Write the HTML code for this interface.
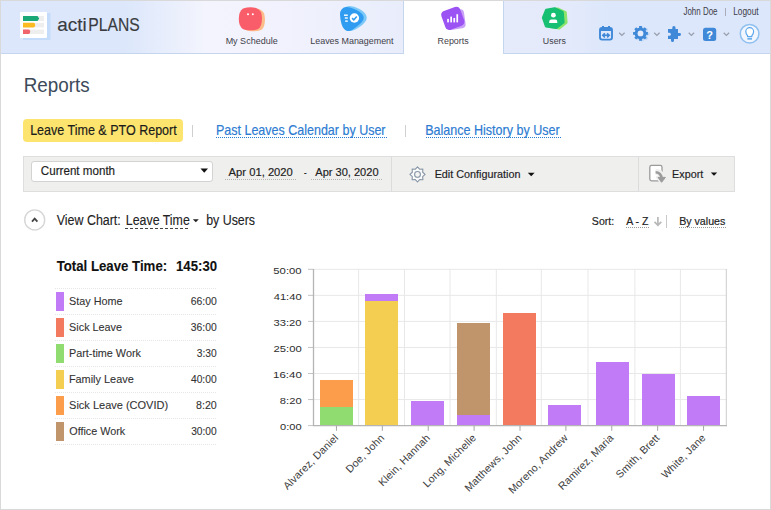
<!DOCTYPE html>
<html><head><meta charset="utf-8"><style>
html,body{margin:0;padding:0}
body{width:771px;height:510px;position:relative;overflow:hidden;background:#fff;font-family:"Liberation Sans",sans-serif}
#frame{position:absolute;left:0;top:0;width:769px;height:508px;border:1px solid #d9d9d9;pointer-events:none}
#hdr{position:absolute;left:0;top:0;width:771px;height:53px;background:#dce7fb;border-bottom:1px solid #c3d6ee}
#tabsbg{position:absolute;left:125px;top:0;width:379px;height:53px;background:linear-gradient(90deg,rgba(243,244,253,0) 0px,#f3f4fd 80px,#f1f2fd 155px,#e9edfb 278px)}
#usrbg{position:absolute;left:503px;top:0;width:110px;height:53px;background:linear-gradient(90deg,#e6ebfb 0px,#e4eafb 60px,rgba(228,234,251,0) 110px)}
#reptab{position:absolute;left:403px;top:0;width:99px;height:54px;background:#fff;border-left:1px solid #c3d6ee;border-right:1px solid #c3d6ee}
</style></head><body>
<div id="hdr"></div>
<div id="tabsbg"></div>
<div id="usrbg"></div>
<div id="reptab"></div><svg style="position:absolute;left:18px;top:10px" width="36" height="32" viewBox="0 0 36 32">
<rect x="5" y="3" width="27.5" height="27" fill="#c4dbf9"/>
<rect x="2" y="2" width="27" height="26" rx="1" fill="#ffffff"/>
<rect x="5" y="6" width="21" height="5" fill="#eeeeee"/>
<rect x="5" y="12.8" width="21" height="4.6" fill="#eeeeee"/>
<rect x="5" y="19.6" width="21" height="4.4" fill="#eeeeee"/>
<path d="M5 6 H19.5 L21.2 8.5 L19.5 11 H5 Z" fill="#1aa876"/>
<path d="M5 12.8 H15.5 Q17.2 12.8 17.2 15.1 Q17.2 17.4 15.5 17.4 H5 Z" fill="#fcbb22"/>
<path d="M5 19.6 H10.5 Q12.2 19.6 12.2 21.8 Q12.2 24 10.5 24 H5 Z" fill="#f0646c"/>
</svg><svg style="position:absolute;left:234px;top:4px" width="36" height="30" viewBox="0 0 36 30">
<path d="M11 6 Q18 3 25 5 Q31 7 31 15 Q31 24 27 26 Q22 28 15 27 Q9 26 7 20 Q6 9 11 6Z" fill="#fdbd8a"/>
<path d="M9 4.5 Q16 2.5 22 4 Q28 6 28 14 Q28 23 24 25 Q19 27 12 26 Q6 25 5 18 Q4 8 9 4.5Z" fill="#f95d6a"/>
<circle cx="14" cy="10.2" r="1" fill="#fff"/><circle cx="18.8" cy="10.2" r="1" fill="#fff"/>
</svg><svg style="position:absolute;left:336px;top:3px" width="36" height="32" viewBox="0 0 36 32">
<path d="M6 10 Q6.5 4 12 3.2 Q17 2.6 23.5 6 Q30.8 10 30.8 14.7 Q30.8 18.8 23.5 24 Q17 28.5 13 28 Q8 27.5 6.5 21 Z" fill="#7cc9f8"/>
<path d="M4 11.5 Q4 5 10 4 Q14 3.6 20 6.8 Q27.8 10.8 27.8 14.9 Q27.8 18.4 20.5 23.8 Q15 28.5 12 28 Q7.5 27.5 5.5 21 Q4 16 4 11.5 Z" fill="#2f9cf1"/>
<circle cx="18.4" cy="15" r="4.7" fill="#fff"/>
<path d="M16.1 15.1 L17.8 16.8 L20.8 13.6" stroke="#2f9cf1" stroke-width="1.5" fill="none"/>
<rect x="8" y="11.5" width="3.8" height="1.4" fill="#fff"/><rect x="8.8" y="14.3" width="3" height="1.4" fill="#fff"/><rect x="9.2" y="17.4" width="2.6" height="1.4" fill="#fff"/>
</svg><svg style="position:absolute;left:438px;top:4px" width="32" height="30" viewBox="0 0 32 30">
<g transform="rotate(-8 17.3 15.6)"><rect x="7.7" y="6" width="19.2" height="19.2" rx="4" fill="#c9a2f8"/></g>
<g transform="rotate(-20 14.8 14.3)"><rect x="4.8" y="4.3" width="20" height="20" rx="4.2" fill="#9b53f3"/></g>
<rect x="9.2" y="14.9" width="1.7" height="3.5" fill="#fff"/>
<rect x="12.3" y="12.6" width="1.7" height="5.8" fill="#fff"/>
<rect x="15.4" y="14" width="1.7" height="4.4" fill="#fff"/>
<rect x="18.4" y="10.2" width="1.7" height="8.2" fill="#fff"/>
</svg><svg style="position:absolute;left:538px;top:4px" width="34" height="30" viewBox="0 0 34 30">
<polygon points="19.6,4.6 27.6,8.3 28.4,18.6 21.3,24.2 11,22.5 8.1,14.1 11.2,6.2" fill="#8de36b" stroke="#8de36b" stroke-width="2.4" stroke-linejoin="round"/>
<polygon points="16.6,4.4 24.6,8.0 25.4,18.3 18.3,23.9 8.0,22.2 5.1,13.8 8.2,6.0" fill="#17bf72" stroke="#17bf72" stroke-width="2.4" stroke-linejoin="round"/>
<circle cx="15.4" cy="11.2" r="2.4" fill="#fff"/>
<path d="M11.2 19 V17.8 Q11.2 15.6 13.4 15.6 H17.3 Q19.3 15.6 19.3 17.8 V19 Z" fill="#fff"/>
</svg><div style="position:absolute;left:725px;top:8px;width:1px;height:8px;background:#a9acb8"></div><svg style="position:absolute;left:597px;top:24px" width="140" height="22" viewBox="0 0 140 22">
<rect x="3" y="4" width="12" height="11.6" rx="2" fill="none" stroke="#3f89d8" stroke-width="1.9"/>
<rect x="3" y="4" width="12" height="3" fill="#3f89d8"/>
<rect x="5" y="2" width="2" height="3" fill="#3f89d8"/><rect x="11" y="2" width="2" height="3" fill="#3f89d8"/>
<path d="M5.8 11.3 H12.2 M7.9 9.3 L5.8 11.3 L7.9 13.3 M10.1 9.3 L12.2 11.3 L10.1 13.3" stroke="#3f89d8" stroke-width="1.6" fill="none"/>
<path d="M22.2 8.8 L24.9 11.4 L27.6 8.8" stroke="#98a0ad" stroke-width="1.3" fill="none"/>
<g transform="translate(45.2 10)" fill="#bcd6f6">
<circle r="5.8"/>
<rect x="-1.4" y="-7.3" width="2.8" height="14.6"/>
<rect x="-1.4" y="-7.3" width="2.8" height="14.6" transform="rotate(45)"/>
<rect x="-1.4" y="-7.3" width="2.8" height="14.6" transform="rotate(90)"/>
<rect x="-1.4" y="-7.3" width="2.8" height="14.6" transform="rotate(135)"/>
</g>
<g transform="translate(43.5 9.4)" fill="#3f89d8">
<circle r="5.9"/>
<rect x="-1.4" y="-7.4" width="2.8" height="14.8"/>
<rect x="-1.4" y="-7.4" width="2.8" height="14.8" transform="rotate(45)"/>
<rect x="-1.4" y="-7.4" width="2.8" height="14.8" transform="rotate(90)"/>
<rect x="-1.4" y="-7.4" width="2.8" height="14.8" transform="rotate(135)"/>
<circle r="2.9" fill="#e4ecfc"/>
</g>
<path d="M57.2 8.8 L59.9 11.4 L62.6 8.8" stroke="#98a0ad" stroke-width="1.3" fill="none"/>
<path d="M71 5 H75.3 V3.6 A1.6 1.6 0 0 1 78.5 3.6 V5 H81 V9.1 H82.6 A1.4 1.4 0 0 1 82.6 11.9 H81 V15 H77 V16.6 A1.5 1.5 0 0 1 74 16.6 V15 H71 V11.7 H72.4 A1.5 1.5 0 0 0 72.4 8.7 H71 Z" fill="#3f89d8"/>
<path d="M91.7 8.8 L94.4 11.4 L97.1 8.8" stroke="#98a0ad" stroke-width="1.3" fill="none"/>
<rect x="106" y="3.8" width="13.2" height="13.2" rx="2.5" fill="#3f89d8"/>
<text x="112.6" y="14.6" font-family="Liberation Sans" font-weight="bold" font-size="11" fill="#fff" text-anchor="middle">?</text>
<path d="M126.7 8.8 L129.4 11.4 L132.1 8.8" stroke="#98a0ad" stroke-width="1.3" fill="none"/>
</svg><svg style="position:absolute;left:738px;top:22px" width="24" height="24" viewBox="0 0 24 24">
<circle cx="11.6" cy="11.7" r="9.3" fill="#f1f6fe" stroke="#8fc0ef" stroke-width="1.5"/>
<path d="M9.6 13.7 Q7.8 12 7.8 9.6 A3.9 3.9 0 0 1 15.6 9.6 Q15.6 12 13.8 13.7 V14.6 H9.6 Z" fill="#fff" stroke="#5ba6ec" stroke-width="1.2" stroke-linejoin="round"/>
<rect x="9.4" y="16.1" width="4.6" height="1.5" fill="#5ba6ec"/>
</svg><div style="position:absolute;left:23px;top:119px;width:160px;height:23px;background:#fde46e;border-radius:4px"></div><div style="position:absolute;left:192px;top:125px;width:1px;height:12px;background:#cfcfcf"></div><div style="position:absolute;left:405px;top:125px;width:1px;height:12px;background:#cfcfcf"></div><div style="position:absolute;left:23px;top:156px;width:710px;height:34px;background:#efefee;border:1px solid #dedede"></div><div style="position:absolute;left:31px;top:161px;width:180px;height:19px;background:#fff;border:1px solid #d3d3d3;border-radius:3px"></div><svg style="position:absolute;left:200px;top:168px" width="9" height="6"><path d="M0.5 0.5 H8 L4.25 4.7Z" fill="#111"/></svg><div style="position:absolute;left:391px;top:157px;width:1px;height:34px;background:#dcdcdc"></div><svg style="position:absolute;left:404px;top:160px" width="28" height="28" viewBox="0 0 28 28">
<polygon points="13.50,6.80 15.64,9.23 18.87,9.03 18.67,12.26 21.10,14.40 18.67,16.54 18.87,19.77 15.64,19.57 13.50,22.00 11.36,19.57 8.13,19.77 8.33,16.54 5.90,14.40 8.33,12.26 8.13,9.03 11.36,9.23" fill="#fafafa" stroke="#8796a6" stroke-width="1.1" stroke-linejoin="round"/>
<circle cx="13.5" cy="14.4" r="2.9" fill="#f4f4f4" stroke="#8796a6" stroke-width="1.1"/>
</svg><svg style="position:absolute;left:527px;top:172px" width="9" height="6"><path d="M0.8 0.8 H7.6 L4.2 4.3Z" fill="#111"/></svg><div style="position:absolute;left:638px;top:157px;width:1px;height:34px;background:#dcdcdc"></div><svg style="position:absolute;left:644px;top:160px" width="28" height="28" viewBox="0 0 28 28">
<rect x="5.8" y="5.4" width="12.2" height="15.4" rx="1.8" fill="#fff" stroke="#9b9b9b" stroke-width="1.3"/>
<path d="M11.5 11.8 Q17 11.8 17.8 17.5" fill="none" stroke="#efefee" stroke-width="6"/>
<path d="M13.2 17.2 L22 17.2 L17.6 22.6 Z" fill="#efefee" stroke="#efefee" stroke-width="3" stroke-linejoin="round"/>
<path d="M11.6 12.2 Q16.6 12.2 17.6 17.8" fill="none" stroke="#9b9b9b" stroke-width="2.6"/>
<path d="M14 17.4 L21.4 17.4 L17.6 22.3 Z" fill="#9b9b9b" stroke="#9b9b9b" stroke-width="1" stroke-linejoin="round"/>
</svg><svg style="position:absolute;left:710px;top:172px" width="9" height="6"><path d="M0.8 0.5 H7.2 L4 3.7Z" fill="#111"/></svg><svg style="position:absolute;left:22px;top:207px" width="26" height="26" viewBox="0 0 26 26">
<circle cx="12.7" cy="12.9" r="10" fill="#fff" stroke="#d6d6d6" stroke-width="1.4"/>
<path d="M10 14.6 L12.7 11.6 L15.4 14.6" fill="none" stroke="#444" stroke-width="1.8"/>
</svg><svg style="position:absolute;left:192px;top:219px" width="8" height="5"><path d="M0.8 0.3 H6.8 L3.8 3.3Z" fill="#222"/></svg><svg style="position:absolute;left:653px;top:216px" width="10" height="11" viewBox="0 0 10 11"><path d="M4.9 1 V9 M1.5 5.8 L4.9 9.2 L8.3 5.8" fill="none" stroke="#b9b9b9" stroke-width="1.7"/></svg><div style="position:absolute;left:666px;top:215px;width:1px;height:13px;background:#c8c8c8"></div><div style="position:absolute;left:56px;top:292px;width:8px;height:19px;background:#c27bf6"></div><div style="position:absolute;left:56px;top:318px;width:8px;height:19px;background:#f47a5f"></div><div style="position:absolute;left:56px;top:344px;width:8px;height:19px;background:#90dc70"></div><div style="position:absolute;left:56px;top:370px;width:8px;height:19px;background:#f3ce50"></div><div style="position:absolute;left:56px;top:396px;width:8px;height:19px;background:#fb9d4b"></div><div style="position:absolute;left:56px;top:422px;width:8px;height:19px;background:#c0956b"></div><svg style="position:absolute;left:0;top:0" width="771" height="510" font-family="Liberation Sans, sans-serif"><line x1="308.0" y1="425.60" x2="313.5" y2="425.60" stroke="#c4c4c4" stroke-width="1"/><line x1="313.5" y1="399.55" x2="726.5" y2="399.55" stroke="#e8e8e8" stroke-width="1"/><line x1="308.0" y1="399.55" x2="313.5" y2="399.55" stroke="#c4c4c4" stroke-width="1"/><line x1="313.5" y1="373.50" x2="726.5" y2="373.50" stroke="#e8e8e8" stroke-width="1"/><line x1="308.0" y1="373.50" x2="313.5" y2="373.50" stroke="#c4c4c4" stroke-width="1"/><line x1="313.5" y1="347.45" x2="726.5" y2="347.45" stroke="#e8e8e8" stroke-width="1"/><line x1="308.0" y1="347.45" x2="313.5" y2="347.45" stroke="#c4c4c4" stroke-width="1"/><line x1="313.5" y1="321.40" x2="726.5" y2="321.40" stroke="#e8e8e8" stroke-width="1"/><line x1="308.0" y1="321.40" x2="313.5" y2="321.40" stroke="#c4c4c4" stroke-width="1"/><line x1="313.5" y1="295.35" x2="726.5" y2="295.35" stroke="#e8e8e8" stroke-width="1"/><line x1="308.0" y1="295.35" x2="313.5" y2="295.35" stroke="#c4c4c4" stroke-width="1"/><line x1="313.5" y1="269.30" x2="726.5" y2="269.30" stroke="#e8e8e8" stroke-width="1"/><line x1="308.0" y1="269.30" x2="313.5" y2="269.30" stroke="#c4c4c4" stroke-width="1"/><line x1="358.60" y1="269" x2="358.60" y2="425.80" stroke="#e8e8e8" stroke-width="1"/><line x1="404.50" y1="269" x2="404.50" y2="425.80" stroke="#e8e8e8" stroke-width="1"/><line x1="450.00" y1="269" x2="450.00" y2="425.80" stroke="#e8e8e8" stroke-width="1"/><line x1="496.30" y1="269" x2="496.30" y2="425.80" stroke="#e8e8e8" stroke-width="1"/><line x1="541.30" y1="269" x2="541.30" y2="425.80" stroke="#e8e8e8" stroke-width="1"/><line x1="588.00" y1="269" x2="588.00" y2="425.80" stroke="#e8e8e8" stroke-width="1"/><line x1="634.90" y1="269" x2="634.90" y2="425.80" stroke="#e8e8e8" stroke-width="1"/><line x1="680.40" y1="269" x2="680.40" y2="425.80" stroke="#e8e8e8" stroke-width="1"/><line x1="726.30" y1="269" x2="726.30" y2="425.80" stroke="#cdcdcd" stroke-width="1"/><rect x="320" y="407" width="33" height="19" fill="#90dc70"/><rect x="320" y="380" width="33" height="27" fill="#fb9d4b"/><rect x="365" y="301" width="33" height="125" fill="#f3ce50"/><rect x="365" y="294" width="33" height="7" fill="#c27bf6"/><rect x="411" y="401" width="33" height="25" fill="#c27bf6"/><rect x="457" y="415" width="33" height="11" fill="#c27bf6"/><rect x="457" y="323" width="33" height="92" fill="#c0956b"/><rect x="503" y="313" width="33" height="113" fill="#f47a5f"/><rect x="548" y="405" width="33" height="21" fill="#c27bf6"/><rect x="596" y="362" width="33" height="64" fill="#c27bf6"/><rect x="642" y="374" width="33" height="52" fill="#c27bf6"/><rect x="687" y="396" width="33" height="30" fill="#c27bf6"/><line x1="313.5" y1="269" x2="313.5" y2="426" stroke="#b4b4b4" stroke-width="1.3"/><line x1="313" y1="425.6" x2="727" y2="425.6" stroke="#b4b4b4" stroke-width="1.3"/><line x1="336.44" y1="425.8" x2="336.44" y2="430.8" stroke="#a6a6a6" stroke-width="1"/><text transform="translate(339.04 438.60) rotate(-45)" text-anchor="end" font-size="10.6" letter-spacing="0.12" fill="#404040">Alvarez, Daniel</text><line x1="382.33" y1="425.8" x2="382.33" y2="430.8" stroke="#a6a6a6" stroke-width="1"/><text transform="translate(384.93 438.60) rotate(-45)" text-anchor="end" font-size="10.6" letter-spacing="0.12" fill="#404040">Doe, John</text><line x1="428.22" y1="425.8" x2="428.22" y2="430.8" stroke="#a6a6a6" stroke-width="1"/><text transform="translate(430.82 438.60) rotate(-45)" text-anchor="end" font-size="10.6" letter-spacing="0.12" fill="#404040">Klein, Hannah</text><line x1="474.11" y1="425.8" x2="474.11" y2="430.8" stroke="#a6a6a6" stroke-width="1"/><text transform="translate(476.71 438.60) rotate(-45)" text-anchor="end" font-size="10.6" letter-spacing="0.12" fill="#404040">Long, Michelle</text><line x1="520.00" y1="425.8" x2="520.00" y2="430.8" stroke="#a6a6a6" stroke-width="1"/><text transform="translate(522.60 438.60) rotate(-45)" text-anchor="end" font-size="10.6" letter-spacing="0.12" fill="#404040">Matthews, John</text><line x1="565.89" y1="425.8" x2="565.89" y2="430.8" stroke="#a6a6a6" stroke-width="1"/><text transform="translate(568.49 438.60) rotate(-45)" text-anchor="end" font-size="10.6" letter-spacing="0.12" fill="#404040">Moreno, Andrew</text><line x1="611.78" y1="425.8" x2="611.78" y2="430.8" stroke="#a6a6a6" stroke-width="1"/><text transform="translate(614.38 438.60) rotate(-45)" text-anchor="end" font-size="10.6" letter-spacing="0.12" fill="#404040">Ramirez, Maria</text><line x1="657.67" y1="425.8" x2="657.67" y2="430.8" stroke="#a6a6a6" stroke-width="1"/><text transform="translate(660.27 438.60) rotate(-45)" text-anchor="end" font-size="10.6" letter-spacing="0.12" fill="#404040">Smith, Brett</text><line x1="703.56" y1="425.8" x2="703.56" y2="430.8" stroke="#a6a6a6" stroke-width="1"/><text transform="translate(706.16 438.60) rotate(-45)" text-anchor="end" font-size="10.6" letter-spacing="0.12" fill="#404040">White, Jane</text></svg>
<svg style="position:absolute;left:0;top:0" width="771" height="510" font-family="Liberation Sans, sans-serif"><text x="57.20" y="31" font-size="18.2" fill="#393b40" stroke="#393b40" stroke-width="0.15" textLength="29.42" lengthAdjust="spacingAndGlyphs">acti</text><text x="88.30" y="31" font-size="18.2" fill="#393b40" stroke="#393b40" stroke-width="0.15" textLength="51.39" lengthAdjust="spacingAndGlyphs">PLANS</text><text x="225.64" y="44" font-size="9.6" fill="#3f3f4a" textLength="52.04" lengthAdjust="spacingAndGlyphs">My Schedule</text><text x="310.26" y="44" font-size="9.6" fill="#3f3f4a" textLength="83.30" lengthAdjust="spacingAndGlyphs">Leaves Management</text><text x="437.55" y="44" font-size="9.6" fill="#3f3f4a" textLength="31.09" lengthAdjust="spacingAndGlyphs">Reports</text><text x="542.85" y="44" font-size="9.6" fill="#3f3f4a" textLength="23.06" lengthAdjust="spacingAndGlyphs">Users</text><text x="683.47" y="15" font-size="10.8" fill="#3c3c46" textLength="34.00" lengthAdjust="spacingAndGlyphs">John Doe</text><text x="733.22" y="15" font-size="10.8" fill="#3c3c46" textLength="25.45" lengthAdjust="spacingAndGlyphs">Logout</text><text x="23.76" y="92" font-size="19.6" fill="#3d4a5a" textLength="65.95" lengthAdjust="spacingAndGlyphs">Reports</text><text x="30.15" y="135" font-size="13.9" fill="#1b1b1b" stroke="#1b1b1b" stroke-width="0.18" textLength="146.59" lengthAdjust="spacingAndGlyphs">Leave Time &amp; PTO Report</text><text x="215.93" y="135" font-size="13.9" fill="#2c7bd2" stroke="#2c7bd2" stroke-width="0.18" textLength="169.62" lengthAdjust="spacingAndGlyphs">Past Leaves Calendar by User</text><line x1="216" y1="137.5" x2="387" y2="137.5" stroke="#2c7bd2" stroke-width="1" stroke-dasharray="1 1"/><text x="425.18" y="135" font-size="13.9" fill="#2c7bd2" stroke="#2c7bd2" stroke-width="0.18" textLength="134.46" lengthAdjust="spacingAndGlyphs">Balance History by User</text><line x1="426" y1="137.5" x2="561" y2="137.5" stroke="#2c7bd2" stroke-width="1" stroke-dasharray="1 1"/><text x="40.85" y="175" font-size="12.2" fill="#1e1e1e" stroke="#1e1e1e" stroke-width="0.18" textLength="74.24" lengthAdjust="spacingAndGlyphs">Current month</text><text x="228.59" y="176" font-size="11.8" fill="#222" stroke="#222" stroke-width="0.18" textLength="64.27" lengthAdjust="spacingAndGlyphs">Apr 01, 2020</text><line x1="225" y1="179.5" x2="296" y2="179.5" stroke="#b4b4b4" stroke-width="1" stroke-dasharray="1 1"/><text x="303.97" y="176" font-size="11.8" fill="#222" stroke="#222" stroke-width="0.18" textLength="2.61" lengthAdjust="spacingAndGlyphs">-</text><text x="315.29" y="176" font-size="11.8" fill="#222" stroke="#222" stroke-width="0.18" textLength="63.25" lengthAdjust="spacingAndGlyphs">Apr 30, 2020</text><line x1="311" y1="179.5" x2="382" y2="179.5" stroke="#b4b4b4" stroke-width="1" stroke-dasharray="1 1"/><text x="434.68" y="178" font-size="11.4" fill="#1e1e1e" stroke="#1e1e1e" stroke-width="0.18" textLength="85.75" lengthAdjust="spacingAndGlyphs">Edit Configuration</text><text x="672.11" y="178" font-size="11.4" fill="#1e1e1e" stroke="#1e1e1e" stroke-width="0.18" textLength="31.09" lengthAdjust="spacingAndGlyphs">Export</text><text x="56.69" y="225" font-size="13.8" fill="#222" stroke="#222" stroke-width="0.12" textLength="64.09" lengthAdjust="spacingAndGlyphs">View Chart:</text><text x="125.86" y="225" font-size="13.8" fill="#222" stroke="#222" stroke-width="0.12" textLength="63.91" lengthAdjust="spacingAndGlyphs">Leave Time</text><line x1="125" y1="228.5" x2="190" y2="228.5" stroke="#444" stroke-width="1" stroke-dasharray="3 2"/><text x="206.17" y="225" font-size="13.8" fill="#222" stroke="#222" stroke-width="0.12" textLength="48.89" lengthAdjust="spacingAndGlyphs">by Users</text><text x="591.87" y="225" font-size="11.2" fill="#222" stroke="#222" stroke-width="0.18" textLength="22.28" lengthAdjust="spacingAndGlyphs">Sort:</text><text x="626.27" y="225" font-size="11.2" fill="#222" stroke="#222" stroke-width="0.18" textLength="22.20" lengthAdjust="spacingAndGlyphs">A - Z</text><line x1="626" y1="227.5" x2="649" y2="227.5" stroke="#9a9a9a" stroke-width="1" stroke-dasharray="1 1"/><text x="679.14" y="225" font-size="11.2" fill="#222" stroke="#222" stroke-width="0.18" textLength="46.25" lengthAdjust="spacingAndGlyphs">By values</text><line x1="679" y1="227.5" x2="726" y2="227.5" stroke="#9a9a9a" stroke-width="1" stroke-dasharray="1 1"/><text x="56.64" y="271" font-size="14" fill="#111" font-weight="bold" stroke="#111" stroke-width="0.1" textLength="110.52" lengthAdjust="spacingAndGlyphs">Total Leave Time:</text><text x="176.06" y="271" font-size="14" fill="#111" font-weight="bold" stroke="#111" stroke-width="0.1" textLength="40.96" lengthAdjust="spacingAndGlyphs">145:30</text><line x1="55" y1="288.5" x2="217" y2="288.5" stroke="#e6e6e6" stroke-width="1" stroke-dasharray="1 1"/><text x="69.07" y="305" font-size="11.4" fill="#333" stroke="#333" stroke-width="0.1" textLength="53.48" lengthAdjust="spacingAndGlyphs">Stay Home</text><text x="190.65" y="305" font-size="11.4" fill="#333" stroke="#333" stroke-width="0.1" textLength="26.09" lengthAdjust="spacingAndGlyphs">66:00</text><line x1="55" y1="314.5" x2="217" y2="314.5" stroke="#e6e6e6" stroke-width="1" stroke-dasharray="1 1"/><text x="69.11" y="331" font-size="11.4" fill="#333" stroke="#333" stroke-width="0.1" textLength="52.94" lengthAdjust="spacingAndGlyphs">Sick Leave</text><text x="190.80" y="331" font-size="11.4" fill="#333" stroke="#333" stroke-width="0.1" textLength="25.87" lengthAdjust="spacingAndGlyphs">36:00</text><line x1="55" y1="340.5" x2="217" y2="340.5" stroke="#e6e6e6" stroke-width="1" stroke-dasharray="1 1"/><text x="68.91" y="357" font-size="11.4" fill="#333" stroke="#333" stroke-width="0.1" textLength="72.06" lengthAdjust="spacingAndGlyphs">Part-time Work</text><text x="196.70" y="357" font-size="11.4" fill="#333" stroke="#333" stroke-width="0.1" textLength="19.93" lengthAdjust="spacingAndGlyphs">3:30</text><line x1="55" y1="366.5" x2="217" y2="366.5" stroke="#e6e6e6" stroke-width="1" stroke-dasharray="1 1"/><text x="68.91" y="383" font-size="11.4" fill="#333" stroke="#333" stroke-width="0.1" textLength="64.82" lengthAdjust="spacingAndGlyphs">Family Leave</text><text x="190.96" y="383" font-size="11.4" fill="#333" stroke="#333" stroke-width="0.1" textLength="25.68" lengthAdjust="spacingAndGlyphs">40:00</text><line x1="55" y1="392.5" x2="217" y2="392.5" stroke="#e6e6e6" stroke-width="1" stroke-dasharray="1 1"/><text x="69.06" y="409" font-size="11.4" fill="#333" stroke="#333" stroke-width="0.1" textLength="99.06" lengthAdjust="spacingAndGlyphs">Sick Leave (COVID)</text><text x="196.02" y="409" font-size="11.4" fill="#333" stroke="#333" stroke-width="0.1" textLength="20.77" lengthAdjust="spacingAndGlyphs">8:20</text><line x1="55" y1="418.5" x2="217" y2="418.5" stroke="#e6e6e6" stroke-width="1" stroke-dasharray="1 1"/><text x="69.25" y="435" font-size="11.4" fill="#333" stroke="#333" stroke-width="0.1" textLength="55.90" lengthAdjust="spacingAndGlyphs">Office Work</text><text x="191.14" y="435" font-size="11.4" fill="#333" stroke="#333" stroke-width="0.1" textLength="25.50" lengthAdjust="spacingAndGlyphs">30:00</text><line x1="55" y1="444.5" x2="217" y2="444.5" stroke="#e6e6e6" stroke-width="1" stroke-dasharray="1 1"/><text x="280.01" y="430" font-size="9.9" fill="#2e2e2e" textLength="21.56" lengthAdjust="spacingAndGlyphs">0:00</text><text x="279.83" y="404" font-size="9.9" fill="#2e2e2e" textLength="21.82" lengthAdjust="spacingAndGlyphs">8:20</text><text x="273.04" y="378" font-size="9.9" fill="#2e2e2e" textLength="28.74" lengthAdjust="spacingAndGlyphs">16:40</text><text x="273.51" y="352" font-size="9.9" fill="#2e2e2e" textLength="28.17" lengthAdjust="spacingAndGlyphs">25:00</text><text x="273.52" y="326" font-size="9.9" fill="#2e2e2e" textLength="28.08" lengthAdjust="spacingAndGlyphs">33:20</text><text x="273.72" y="300" font-size="9.9" fill="#2e2e2e" textLength="27.90" lengthAdjust="spacingAndGlyphs">41:40</text><text x="273.34" y="274" font-size="9.9" fill="#2e2e2e" textLength="28.31" lengthAdjust="spacingAndGlyphs">50:00</text></svg>
<div id="frame"></div>
</body></html>
